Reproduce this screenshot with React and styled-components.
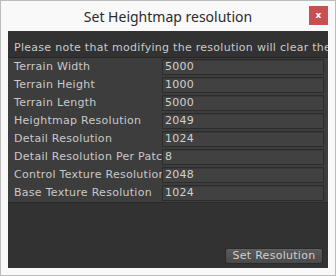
import React from "react";
import styled, { createGlobalStyle } from "styled-components";

const Global = createGlobalStyle`
  html, body { margin: 0; padding: 0; background: #f7f7f7; }
  * { box-sizing: border-box; }
`;

const Window = styled.div`
  width: 336px;
  height: 276px;
  border: 1px solid #bcbcbc;
  background: #f9f9f9;
  display: flex;
  flex-direction: column;
  padding: 0 7px 7px 7px;
`;

const TitleBar = styled.div`
  height: 30px;
  flex: none;
  position: relative;
  display: flex;
  align-items: center;
  justify-content: center;
`;

const Title = styled.div`
  font-family: "Noto Sans", "Open Sans", sans-serif;
  font-size: 14px;
  color: #2b2b2b;
  margin-top: 1px;
`;

const Close = styled.div`
  position: absolute;
  right: 0;
  top: 5px;
  width: 19px;
  height: 19px;
  background: #c75050;
  color: #fff;
  font-family: "DejaVu Sans", sans-serif;
  font-weight: bold;
  font-size: 9px;
  display: flex;
  align-items: center;
  justify-content: center;
  line-height: 1;
`;

const Content = styled.div`
  flex: 1;
  background: #323232;
  display: flex;
  flex-direction: column;
  padding-top: 8px;
  overflow: hidden;
  font-family: "DejaVu Sans", Verdana, sans-serif;
  font-size: 11px;
  letter-spacing: 0.28px;
  color: #c9c9c9;
`;

const Note = styled.div`
  height: 18px;
  line-height: 18px;
  padding-left: 6px;
  white-space: nowrap;
  overflow: hidden;
`;

const Panel = styled.div`
  background: #3d3d3d;
  border-top: 1px solid #262626;
  border-bottom: 1px solid #2a2a2a;
  display: flex;
  flex-direction: column;
`;

const Row = styled.div`
  height: 18px;
  display: flex;
  align-items: center;
`;

const Label = styled.div`
  width: 154px;
  flex: none;
  padding-left: 6px;
  white-space: nowrap;
  overflow: hidden;
  line-height: 18px;
`;

const Field = styled.div`
  width: 162px;
  height: 16px;
  background: #414141;
  border: 1px solid #2c2c2c;
  box-shadow: inset 0 1px 0 #383838;
  padding-left: 2px;
  line-height: 14px;
  color: #d0d0d0;
`;

const Footer = styled.div`
  margin-top: auto;
  display: flex;
  justify-content: flex-end;
  padding: 0 5px 4px 0;
`;

const Button = styled.div`
  width: 98px;
  height: 16px;
  border: 1px solid #2a2a2a;
  border-radius: 3px;
  background: linear-gradient(#5a5a5a, #4a4a4a);
  box-shadow: inset 0 1px 0 #636363;
  color: #cfcfcf;
  display: flex;
  align-items: center;
  justify-content: center;
  line-height: 14px;
  white-space: nowrap;
`;

const rows = [
  ["Terrain Width", "5000"],
  ["Terrain Height", "1000"],
  ["Terrain Length", "5000"],
  ["Heightmap Resolution", "2049"],
  ["Detail Resolution", "1024"],
  ["Detail Resolution Per Patch", "8"],
  ["Control Texture Resolution", "2048"],
  ["Base Texture Resolution", "1024"],
];

export default function App() {
  return (
    <>
      <Global />
      <Window>
        <TitleBar>
          <Title>Set Heightmap resolution</Title>
          <Close>x</Close>
        </TitleBar>
        <Content>
          <Note>Please note that modifying the resolution will clear the heightmap, detail map or splatmap.</Note>
          <Panel>
            {rows.map(([l, v]) => (
              <Row key={l}>
                <Label>{l}</Label>
                <Field>{v}</Field>
              </Row>
            ))}
          </Panel>
          <Footer>
            <Button>Set Resolution</Button>
          </Footer>
        </Content>
      </Window>
    </>
  );
}
